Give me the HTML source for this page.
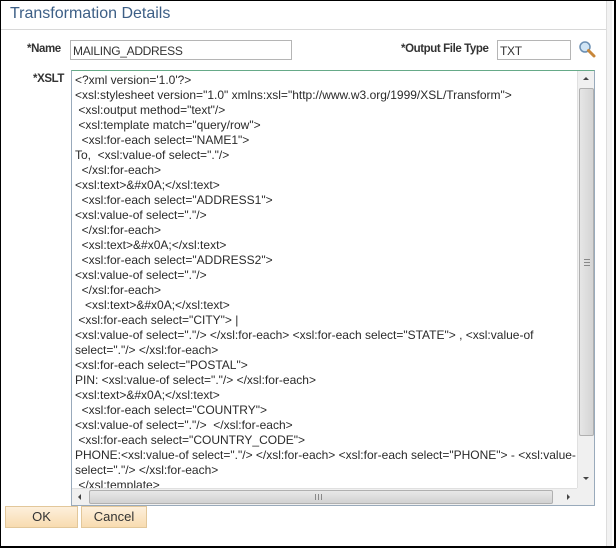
<!DOCTYPE html>
<html><head><style>
*{margin:0;padding:0;box-sizing:border-box}
body{width:616px;height:548px;background:#fff;font-family:"Liberation Sans",Arial,sans-serif;position:relative;overflow:hidden}
.frame{position:absolute;left:0;top:0;width:616px;height:548px;border:1px solid #000;border-right:2px solid #000;border-bottom:2px solid #000}
.rband{position:absolute;left:606px;top:1px;width:6px;height:545px;background:#f2f2f2;border-left:1px solid #ddd}
.title{position:absolute;left:10px;top:5px;font-size:16px;color:#3d5f86}
.tline{position:absolute;left:1px;top:29px;width:605px;height:1px;background:#d8d8d8}
.lbl{position:absolute;font-size:11.5px;font-weight:bold;color:#333;letter-spacing:-0.4px}
.inp{position:absolute;border:1px solid #b5b5b5;font-size:12px;color:#333;padding:3px 2px;height:20px;letter-spacing:-0.3px}
.ta{position:absolute;left:71px;top:70px;width:524px;height:436px;border:1px solid #9ab;border-top-color:#6a8;}
.txt{position:absolute;left:3px;top:2px;font-size:12px;line-height:15px;white-space:pre;color:#2a2a2a;letter-spacing:0px}
.vs{position:absolute;right:0;top:0;width:17px;height:419px;background:#f0f0f0;border-left:1px solid #e0e0e0}
.thumb{position:absolute;left:1px;top:17px;width:15px;height:348px;background:linear-gradient(90deg,#e6e6e6,#d4d4d4);border:1px solid #b0b0b0;border-radius:2px}
.hs{position:absolute;left:0;bottom:0;width:505px;height:17px;background:#f0f0f0;border-top:1px solid #e0e0e0}
.hthumb{position:absolute;left:17px;top:1px;width:464px;height:14px;background:linear-gradient(#e8e8e8,#d2d2d2);border:1px solid #b0b0b0;border-radius:2px}
.corner{position:absolute;right:0;bottom:0;width:17px;height:17px;background:#f0f0f0}
.btn{position:absolute;top:506px;height:22px;background:linear-gradient(#fdf0dc,#f8dcb0);border:1px solid #e2c79a;font-size:13px;color:#333;text-align:center;line-height:20px}
.arr{position:absolute;width:0;height:0}
</style></head><body>
<div class="frame"></div>
<div class="rband"></div>
<div class="title">Transformation Details</div>
<div class="tline"></div>
<div class="lbl" style="left:27px;top:43px">*Name</div>
<div class="inp" style="left:70px;top:40px;width:222px">MAILING_ADDRESS</div>
<div class="lbl" style="left:401px;top:43px">*Output File Type</div>
<div class="inp" style="left:497px;top:40px;width:74px">TXT</div>
<svg style="position:absolute;left:578px;top:40px" width="18" height="18" viewBox="0 0 18 18"><circle cx="7" cy="7" r="5" fill="#cfe4f5" stroke="#6b8fb3" stroke-width="1.5"/><path d="M10.5 10.5 L16 16" stroke="#c8873a" stroke-width="3" stroke-linecap="round"/></svg>
<div class="lbl" style="left:33px;top:73px">*XSLT</div>
<div class="ta">
<div class="txt">&lt;?xml version='1.0'?&gt;
&lt;xsl:stylesheet version="1.0" xmlns:xsl="http://www.w3.org/1999/XSL/Transform"&gt;
 &lt;xsl:output method="text"/&gt;
 &lt;xsl:template match="query/row"&gt;
  &lt;xsl:for-each select="NAME1"&gt;
To,  &lt;xsl:value-of select="."/&gt;
  &lt;/xsl:for-each&gt;
&lt;xsl:text&gt;&amp;#x0A;&lt;/xsl:text&gt;
  &lt;xsl:for-each select="ADDRESS1"&gt;
&lt;xsl:value-of select="."/&gt;
  &lt;/xsl:for-each&gt;
  &lt;xsl:text&gt;&amp;#x0A;&lt;/xsl:text&gt;
  &lt;xsl:for-each select="ADDRESS2"&gt;
&lt;xsl:value-of select="."/&gt;
  &lt;/xsl:for-each&gt;
   &lt;xsl:text&gt;&amp;#x0A;&lt;/xsl:text&gt;
 &lt;xsl:for-each select="CITY"&gt; |
&lt;xsl:value-of select="."/&gt; &lt;/xsl:for-each&gt; &lt;xsl:for-each select="STATE"&gt; , &lt;xsl:value-of
select="."/&gt; &lt;/xsl:for-each&gt;
&lt;xsl:for-each select="POSTAL"&gt;
PIN: &lt;xsl:value-of select="."/&gt; &lt;/xsl:for-each&gt;
&lt;xsl:text&gt;&amp;#x0A;&lt;/xsl:text&gt;
  &lt;xsl:for-each select="COUNTRY"&gt;
&lt;xsl:value-of select="."/&gt;  &lt;/xsl:for-each&gt;
 &lt;xsl:for-each select="COUNTRY_CODE"&gt;
PHONE:&lt;xsl:value-of select="."/&gt; &lt;/xsl:for-each&gt; &lt;xsl:for-each select="PHONE"&gt; - &lt;xsl:value-
select="."/&gt; &lt;/xsl:for-each&gt;
 &lt;/xsl:template&gt;</div>
<div class="vs"><div class="arr" style="left:5px;top:6px;border:3px solid transparent;border-bottom:3px solid #444;border-top:0"></div><div class="thumb"><div style="position:absolute;left:4px;top:170px;width:6px;height:7px;border-top:1px solid #888;border-bottom:1px solid #888"><div style="margin-top:2px;height:1px;background:#888"></div></div></div><div class="arr" style="left:5px;top:406px;border:3px solid transparent;border-top:3px solid #444;border-bottom:0"></div></div>
<div class="hs"><div class="arr" style="left:6px;top:5px;border:3px solid transparent;border-right:3px solid #444;border-left:0"></div><div class="hthumb"><div style="position:absolute;left:225px;top:3px;width:7px;height:6px;border-left:1px solid #888;border-right:1px solid #888"><div style="margin-left:2px;width:1px;height:6px;background:#888"></div></div></div><div class="arr" style="left:495px;top:5px;border:3px solid transparent;border-left:3px solid #444;border-right:0"></div></div>
<div class="corner"></div>
</div>
<div class="btn" style="left:5px;width:73px">OK</div>
<div class="btn" style="left:81px;width:66px">Cancel</div>
</body></html>
